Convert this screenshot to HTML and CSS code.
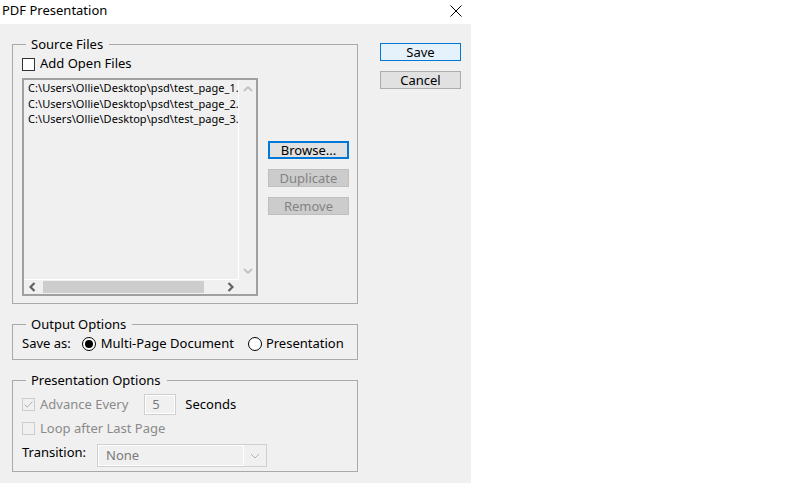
FILE: index.html
```html
<!DOCTYPE html>
<html lang="en">

<head>
    <meta charset="UTF-8">
    <meta name="viewport" content="width=device-width, initial-scale=1.0">
    <title>PDF Presentation</title>
    <link rel="stylesheet" href="styles.css">
</head>

<body>
    <div class="dialog">
        <!-- Title bar -->
        <div class="titlebar">
            <span class="title">PDF Presentation</span>
            <svg class="close" width="12" height="12" viewBox="0 0 12 12">
                <path d="M0.5 0.5 L11.5 11.5 M11.5 0.5 L0.5 11.5" stroke="#000" stroke-width="1" fill="none"/>
            </svg>
        </div>

        <div class="content">
            <div class="main">
                <!-- Source Files -->
                <fieldset class="group source">
                    <legend>Source Files</legend>
                    <div class="check-row">
                        <span class="checkbox"></span>
                        <span>Add Open Files</span>
                    </div>
                    <div class="source-body">
                        <div class="listbox">
                            <div class="list-top">
                                <ul class="files">
                                    <li>C:\Users\Ollie\Desktop\psd\test_page_1.psd</li>
                                    <li>C:\Users\Ollie\Desktop\psd\test_page_2.psd</li>
                                    <li>C:\Users\Ollie\Desktop\psd\test_page_3.psd</li>
                                </ul>
                                <div class="vscroll">
                                    <svg width="10" height="6" viewBox="0 0 10 6"><path d="M1 5 L5 1 L9 5" stroke="#c4c4c4" stroke-width="2" fill="none"/></svg>
                                    <svg width="10" height="6" viewBox="0 0 10 6"><path d="M1 1 L5 5 L9 1" stroke="#c4c4c4" stroke-width="2" fill="none"/></svg>
                                </div>
                            </div>
                            <div class="list-bottom">
                                <div class="hscroll">
                                    <span class="arrow">
                                        <svg width="7" height="10" viewBox="0 0 7 10"><path d="M5.5 1 L1.5 5 L5.5 9" stroke="#606060" stroke-width="2.2" fill="none"/></svg>
                                    </span>
                                    <div class="track"><div class="thumb"></div></div>
                                    <span class="arrow">
                                        <svg width="7" height="10" viewBox="0 0 7 10"><path d="M1.5 1 L5.5 5 L1.5 9" stroke="#606060" stroke-width="2.2" fill="none"/></svg>
                                    </span>
                                </div>
                                <div class="corner"></div>
                            </div>
                        </div>
                        <div class="file-buttons">
                            <button class="btn focused">Browse...</button>
                            <button class="btn" disabled>Duplicate</button>
                            <button class="btn" disabled>Remove</button>
                        </div>
                    </div>
                </fieldset>

                <!-- Output Options -->
                <fieldset class="group output">
                    <legend>Output Options</legend>
                    <div class="radio-row">
                        <span class="save-label">Save as:</span>
                        <span class="radio checked"></span>
                        <span>Multi-Page Document</span>
                        <span class="radio second"></span>
                        <span>Presentation</span>
                    </div>
                </fieldset>

                <!-- Presentation Options -->
                <fieldset class="group presentation">
                    <legend>Presentation Options</legend>
                    <div class="advance-row">
                        <span class="checkbox disabled checked">
                            <svg width="11" height="11" viewBox="0 0 11 11"><path d="M1.5 5.5 L4.2 8.2 L9.5 2.5" stroke="#b0b0b0" stroke-width="1" fill="none"/></svg>
                        </span>
                        <span class="muted">Advance Every</span>
                        <span class="number-box">5</span>
                        <span class="seconds">Seconds</span>
                    </div>
                    <div class="loop-row">
                        <span class="checkbox disabled"></span>
                        <span class="muted">Loop after Last Page</span>
                    </div>
                    <div class="transition-row">
                        <span class="transition-label">Transition:</span>
                        <div class="select">
                            <span class="select-value">None</span>
                            <span class="select-arrow">
                                <svg width="10" height="6" viewBox="0 0 10 6"><path d="M1 1 L5 5 L9 1" stroke="#b4b4b4" stroke-width="1" fill="none"/></svg>
                            </span>
                        </div>
                    </div>
                </fieldset>
            </div>

            <!-- Dialog actions -->
            <div class="actions">
                <button class="btn default">Save</button>
                <button class="btn">Cancel</button>
            </div>
        </div>
    </div>
</body>

</html>
```

FILE: styles.css
```css
body {
    margin: 0;
    background-color: #fff;
    font-family: "Noto Sans", "Liberation Sans", sans-serif;
    font-size: 13px;
    color: #000;
}

.dialog {
    width: 471px;
    height: 483px;
    background-color: #f0f0f0;
}

.titlebar {
    height: 24px;
    background-color: #fff;
    display: flex;
    justify-content: space-between;
    align-items: flex-start;
    padding: 0 9px 0 2px;
}

.title {
    line-height: 20px;
}

.close {
    margin-top: 5px;
}

.content {
    display: flex;
    padding: 12px 0 0 12px;
}

.main {
    width: 346px;
}

.actions {
    margin-left: 22px;
    padding-top: 7px;
}

.actions .btn + .btn {
    margin-top: 10px;
}

/* Group boxes */
.group {
    margin: 0;
    min-width: 0;
    border: 1px solid #a9a9a9;
    padding: 0 8px 7px 9px;
}

.group legend {
    margin-left: 4px;
    padding: 0 6px 0 5px;
    line-height: 16px;
}

.output,
.presentation {
    margin-top: 12px;
}

/* Buttons */
.btn {
    display: block;
    width: 81px;
    height: 18px;
    padding: 0;
    font: inherit;
    line-height: 16px;
    color: #000;
    background-color: #e1e1e1;
    border: 1px solid #adadad;
}

.btn.default {
    background-color: #e5f1fb;
    border-color: #0078d7;
}

.btn.focused {
    border: 2px solid #0078d7;
    line-height: 14px;
}

.btn:disabled {
    background-color: #cccccc;
    border-color: #bfbfbf;
    color: #838383;
}

/* Checkboxes and radios */
.checkbox {
    width: 11px;
    height: 11px;
    border: 1px solid #333;
    background-color: #fff;
    flex-shrink: 0;
    display: flex;
}

.checkbox.disabled {
    border-color: #cccccc;
    background-color: #f0f0f0;
}

.radio {
    width: 12px;
    height: 12px;
    border: 1px solid #000;
    border-radius: 50%;
    background-color: #fff;
    flex-shrink: 0;
    position: relative;
}

.radio.checked::after {
    content: "";
    position: absolute;
    left: 2px;
    top: 2px;
    width: 8px;
    height: 8px;
    border-radius: 50%;
    background-color: #000;
}

.muted {
    color: #8a8a8a;
}

/* Source files */
.check-row {
    display: flex;
    align-items: flex-start;
    gap: 5px;
    padding-top: 4px;
    line-height: 15px;
}

.check-row .checkbox {
    margin-top: 2px;
}

.source-body {
    display: flex;
    margin-top: 7px;
}

.listbox {
    width: 232px;
    height: 214px;
    border: 2px solid #a0a0a0;
    background-color: #f0f0f0;
    display: flex;
    flex-direction: column;
}

.list-top {
    display: flex;
    height: 200px;
}

.files {
    list-style: none;
    margin: 0;
    padding: 0 0 0 4px;
    width: 210px;
    border-right: 1px solid #fff;
    border-bottom: 1px solid #fff;
    font-size: 11px;
    letter-spacing: 0.05px;
    line-height: 15.5px;
    white-space: nowrap;
    overflow: hidden;
}

.vscroll {
    width: 17px;
    display: flex;
    flex-direction: column;
    justify-content: space-between;
    align-items: center;
    padding: 6px 0 6px 0;
    box-sizing: border-box;
}

.list-bottom {
    display: flex;
    flex: 1;
}

.hscroll {
    width: 215px;
    display: flex;
    align-items: stretch;
}

.hscroll .arrow {
    width: 17px;
    display: flex;
    align-items: center;
    justify-content: center;
}

.track {
    flex: 1;
    padding: 1px 2px;
}

.thumb {
    width: 161px;
    height: 100%;
    background-color: #cdcdcd;
}

.corner {
    width: 17px;
}

.file-buttons {
    margin-left: 10px;
    padding-top: 63px;
}

.file-buttons .btn + .btn {
    margin-top: 10px;
}

/* Output options */
.radio-row {
    display: flex;
    align-items: center;
    padding: 4px 0 1px;
    line-height: 15px;
    white-space: nowrap;
}

.save-label {
    margin-right: 11px;
}

.radio {
    margin-right: 5px;
}

.radio.second {
    margin-left: 14px;
    margin-right: 4px;
}

/* Presentation options */
.presentation {
    padding-bottom: 4px;
}

.advance-row {
    display: flex;
    align-items: center;
    margin-top: 6px;
    line-height: 15px;
}

.advance-row .checkbox,
.loop-row .checkbox {
    margin-right: 5px;
}

.number-box {
    width: 30px;
    height: 19px;
    margin-left: 16px;
    border: 1px solid #cfcfcf;
    box-shadow: inset 1px 1px 0 #fff, inset -1px -1px 0 #fff;
    line-height: 19px;
    color: #7a7a7a;
    text-indent: 7px;
}

.seconds {
    margin-left: 9px;
}

.loop-row {
    display: flex;
    align-items: center;
    margin-top: 6px;
    line-height: 15px;
}

.transition-row {
    display: flex;
    align-items: flex-start;
    margin-top: 8px;
}

.transition-label {
    line-height: 15px;
    padding-top: 1px;
    width: 75px;
}

.select {
    width: 168px;
    height: 21px;
    border: 1px solid #cfcfcf;
    display: flex;
}

.select-value {
    flex: 1;
    border: 1px solid #fff;
    padding-left: 7px;
    line-height: 19px;
    color: #7a7a7a;
}

.select-arrow {
    width: 22px;
    display: flex;
    align-items: center;
    justify-content: center;
}
```
